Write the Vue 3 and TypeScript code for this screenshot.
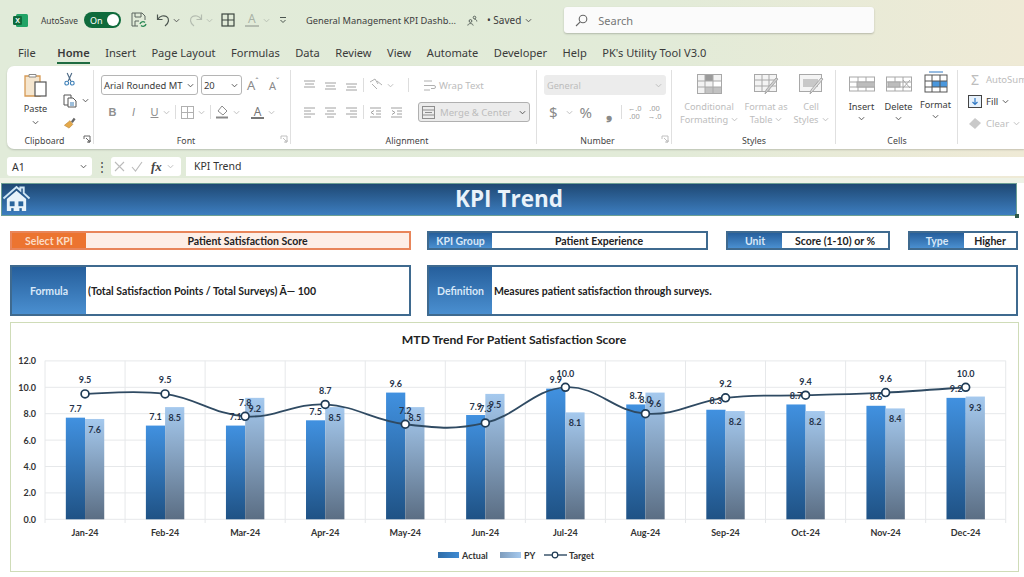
<script setup lang="ts">
import { h } from 'vue'

const Chev = () =>
  h('svg', { class: 'chev', viewBox: '0 0 8 5', width: 7, height: 5 }, h('path', { d: 'M1 1l3 3 3-3', fill: 'none', stroke: 'currentColor', 'stroke-width': 1.1 }))

const tabs = ['File', 'Home', 'Insert', 'Page Layout', 'Formulas', 'Data', 'Review', 'View', 'Automate', 'Developer', 'Help', "PK's Utility Tool V3.0"]

const months = ['Jan-24', 'Feb-24', 'Mar-24', 'Apr-24', 'May-24', 'Jun-24', 'Jul-24', 'Aug-24', 'Sep-24', 'Oct-24', 'Nov-24', 'Dec-24']
const actual = [7.7, 7.1, 7.1, 7.5, 9.6, 7.9, 9.9, 8.7, 8.3, 8.7, 8.6, 9.2]
const py = [7.6, 8.5, 9.2, 8.5, 8.5, 9.5, 8.1, 9.6, 8.2, 8.2, 8.4, 9.3]
const target = [9.5, 9.5, 7.8, 8.7, 7.2, 7.3, 10.0, 8.0, 9.2, 9.4, 9.6, 10.0]

const X0 = 45
const STEP = 80.06
const Y0 = 519.3
const UNIT = 13.2
const BAR = 19.2
const cx = (i: number) => X0 + STEP * (i + 0.5)
const vy = (v: number) => Y0 - v * UNIT

const ticks = [0, 2, 4, 6, 8, 10, 12]
const verticals = Array.from({ length: 13 }, (_, i) => X0 + STEP * i)
const points = target.map((v, i) => ({ x: cx(i), y: vy(v), v }))

function smooth(p: { x: number; y: number }[]): string {
  let d = `M${p[0].x} ${p[0].y}`
  for (let i = 0; i < p.length - 1; i++) {
    const a = p[Math.max(i - 1, 0)]
    const b = p[i]
    const c = p[i + 1]
    const e = p[Math.min(i + 2, p.length - 1)]
    const k = 0.2
    d += ` C${b.x + (c.x - a.x) * k} ${b.y + (c.y - a.y) * k} ${c.x - (e.x - b.x) * k} ${c.y - (e.y - b.y) * k} ${c.x} ${c.y}`
  }
  return d
}
const linePath = smooth(points)
</script>

<template>
  <div class="app">
    <header class="titlebar">
      <svg class="m13" width="15" height="15" viewBox="0 0 15 15"><rect x="3" y="1" width="12" height="13" rx="1.5" fill="#21a366" /><rect x="0" y="3" width="9" height="9" rx="1.2" fill="#0f6b3c" /><text x="4.5" y="10" font-size="7" font-weight="700" fill="#fff" text-anchor="middle" font-family="Liberation Sans, sans-serif">X</text></svg>
      <span class="autosave">AutoSave</span>
      <span class="toggle"><span class="on">On</span><i class="knob"></i></span>
      <svg class="m10" width="16" height="16" viewBox="0 0 16 16" fill="none" stroke="#5c6660" stroke-width="1"><path d="M1 1h10l3 3v4M1 1v13h6" /><path d="M4 1v4h6V1M4 14V9h4" /><path d="M9 12a3 3 0 0 1 5-1.5M15 12a3 3 0 0 1-5 1.5" stroke="#2e8b57" stroke-width="1.3" /></svg>
      <svg class="m9" width="14" height="14" viewBox="0 0 14 14" fill="none" stroke="#4c5650" stroke-width="1.2"><path d="M1.5 1.5v5h5" /><path d="M1.8 6.2C4 2.8 8 2 10.5 3.6c3 2 2.8 6.4-1.5 9.4" /></svg>
      <Chev class="m3 dark" />
      <svg class="m9" width="14" height="14" viewBox="0 0 14 14" fill="none" stroke="#b4bcb0" stroke-width="1.2"><path d="M12.5 1.5v5h-5" /><path d="M12.2 6.2C10 2.8 6 2 3.5 3.6c-3 2-2.8 6.4 1.5 9.4" /></svg>
      <Chev class="m3 pale" />
      <svg class="m8" width="14" height="14" viewBox="0 0 14 14" fill="none" stroke="#3d4640" stroke-width="1.2"><rect x="1" y="1" width="12" height="12" /><path d="M7 1v12M1 7h12" /></svg>
      <span class="font-a"><b>A</b><i></i></span>
      <Chev class="m4 pale" />
      <svg class="m9" width="8" height="8" viewBox="0 0 8 8" fill="none" stroke="#4c5650"><path d="M1 1.5h6M1.5 4l2.5 2.5L6.5 4" /></svg>
      <span class="doc">General Management KPI Dashb...</span>
      <svg class="m11" width="11" height="11" viewBox="0 0 11 11" fill="none" stroke="#4c5650" stroke-width=".9"><circle cx="3.5" cy="6" r="1.4" /><path d="M.8 10.5c.3-2.6 5-2.6 5.4 0" /><circle cx="7.5" cy="2.5" r="1.3" /><path d="M9.8 6.5c0-1.5-1-2.3-2.3-2.3" /></svg>
      <span class="saved">• Saved</span>
      <Chev class="m4 dark" />
      <div class="search">
        <svg width="13" height="13" viewBox="0 0 13 13" fill="none" stroke="#666" stroke-width="1.1"><circle cx="8" cy="5" r="3.8" /><path d="M5.2 7.8 1 12" /></svg>
        <span>Search</span>
      </div>
    </header>

    <nav class="tabs">
      <span v-for="t in tabs" :key="t" class="tab" :class="{ active: t === 'Home', first: t === 'File' }">{{ t }}</span>
    </nav>

    <section class="ribbon">
      <div class="group g-clip">
        <div class="g-body clip">
          <div class="paste">
            <svg width="25" height="26" viewBox="0 0 25 26" fill="none"><path d="M2 4h15v20H2z" fill="#f5e6cf" stroke="#d69a55" stroke-width="1.3" /><path d="M6 5V2.5h7V5z" fill="#fff" stroke="#8a8a8a" /><rect x="12" y="10" width="11" height="14" fill="#fff" stroke="#555" stroke-width="1.2" /></svg>
            <span class="lbl">Paste</span>
            <Chev class="dark" />
          </div>
          <div class="clip-col">
            <svg width="13" height="15" viewBox="0 0 13 15" fill="none" stroke="#4d6a86" stroke-width="1.2"><path d="M4 1l4 9M9 1L5 10" /><circle cx="3.5" cy="12" r="2" stroke="#3c7fb8" /><circle cx="9.5" cy="12" r="2" stroke="#3c7fb8" /></svg>
            <div class="row-c">
              <svg width="15" height="14" viewBox="0 0 15 14" fill="none" stroke="#555" stroke-width="1"><path d="M1 1h7v10H1z" /><path d="M5 4h5l3 3v6H5z" fill="#fff" /><path d="M7 9h4M7 11h4" stroke="#3c7fb8" /></svg>
              <Chev class="m4 dark" />
            </div>
            <svg width="14" height="14" viewBox="0 0 14 14"><path d="M8 6l3-4 2 1.5-3 4z" fill="#666" /><path d="M1 10l6-5 3 4-4 4z" fill="#e5a94a" stroke="#b57d2a" stroke-width=".6" /></svg>
          </div>
        </div>
        <div class="g-label shift12">Clipboard</div>
        <svg class="launch" width="8" height="8" viewBox="0 0 8 8" fill="none" stroke="#666"><path d="M1 4V1h6v6H4M3 3l4 4M5 7h2V5" /></svg>
      </div>

      <div class="group g-font">
        <div class="g-body">
          <div class="rrow pl7">
            <div class="sel w96"><span>Arial Rounded MT</span><Chev class="dark" /></div>
            <div class="sel w41 ml3"><span>20</span><Chev class="dark" /></div>
            <span class="grow-a ml5">A<sup>ˆ</sup></span>
            <span class="grow-a small ml8">A<sup>ˇ</sup></span>
          </div>
          <div class="rrow pl14 dis">
            <b class="g-b">B</b>
            <i class="g-i ml12">I</i>
            <u class="g-u ml12">U</u>
            <Chev class="m4" />
            <i class="vsep ml5"></i>
            <svg class="ml5" width="13" height="13" viewBox="0 0 13 13" fill="none" stroke="#b0b0b0"><rect x=".5" y=".5" width="12" height="12" /><path d="M6.5 0v13M0 6.5h13" /></svg>
            <Chev class="m4" />
            <i class="vsep ml5"></i>
            <svg class="ml5" width="13" height="14" viewBox="0 0 13 14" fill="none" stroke="#8c8c8c"><path d="M6 1l5 5-4 4-5-4z" /><path d="M0 12.5h12" stroke="#888" stroke-width="2" /></svg>
            <Chev class="m4" />
            <span class="fc-a ml11">A</span>
            <Chev class="m4" />
          </div>
        </div>
        <div class="g-label shift13">Font</div>
        <svg class="launch" width="8" height="8" viewBox="0 0 8 8" fill="none" stroke="#c0c0c0"><path d="M1 4V1h6v6H4M3 3l4 4M5 7h2V5" /></svg>
      </div>

      <div class="group g-align">
        <div class="g-body">
          <div class="rrow pl12 dis">
            <svg width="13" height="10" viewBox="0 0 13 10" stroke="#a0a0a0"><path d="M1 1h11M2 4h9M1 7h11" /></svg>
            <svg class="ml8" width="13" height="10" viewBox="0 0 13 10" stroke="#a0a0a0"><path d="M1 3h11M2 6h9M1 9h11" /></svg>
            <svg class="ml8" width="13" height="12" viewBox="0 0 13 12" stroke="#a0a0a0"><path d="M1 5h11M2 8h9M1 11h11" /></svg>
            <i class="vsep ml5"></i>
            <svg class="ml5" width="14" height="14" viewBox="0 0 14 14" fill="none" stroke="#b0b0b0"><path d="M1 4l5-3 3 5M3 6l5 5M8 3l5 4" /></svg>
            <Chev class="m4" />
            <i class="vsep ml14"></i>
            <span class="wrap ml14"><svg width="13" height="13" viewBox="0 0 13 13" fill="none" stroke="#b0b0b0"><path d="M1 2h8M1 11h6M1 6.5h10a1.5 1.5 0 0 1 0 3H8" /></svg>Wrap Text</span>
          </div>
          <div class="rrow pl12 dis">
            <svg width="13" height="11" viewBox="0 0 13 11" stroke="#a0a0a0"><path d="M1 1h11M1 4h7M1 7h11M1 10h7" /></svg>
            <svg class="ml8" width="13" height="11" viewBox="0 0 13 11" stroke="#a0a0a0"><path d="M1 1h11M3 4h7M1 7h11M3 10h7" /></svg>
            <svg class="ml8" width="13" height="11" viewBox="0 0 13 11" stroke="#a0a0a0"><path d="M1 1h11M5 4h7M1 7h11M5 10h7" /></svg>
            <i class="vsep ml5"></i>
            <svg class="ml5" width="13" height="11" viewBox="0 0 13 11" fill="none" stroke="#a0a0a0"><path d="M1 1h11M7 4h5M7 7h5M1 10h11M5 3.5 2 5.5 5 7.5" /></svg>
            <svg class="ml8" width="13" height="11" viewBox="0 0 13 11" fill="none" stroke="#a0a0a0"><path d="M1 1h11M7 4h5M7 7h5M1 10h11M2 3.5 5 5.5 2 7.5" /></svg>
            <div class="merge ml15">
              <svg width="13" height="13" viewBox="0 0 13 13" fill="none" stroke="#8e8e8e"><rect x=".5" y=".5" width="12" height="12" /><path d="M0 4h13M0 9h13M3 6.5h7" /></svg>
              <span>Merge &amp; Center</span>
              <Chev class="dark" />
            </div>
          </div>
        </div>
        <div class="g-label shift14">Alignment</div>
      </div>

      <div class="group g-num">
        <div class="g-body">
          <div class="rrow pl7">
            <div class="numsel"><span>General</span><Chev /></div>
          </div>
          <div class="rrow pl12 numrow">
            <span class="n-sym">$</span>
            <Chev class="m8" />
            <span class="n-sym pct ml7">%</span>
            <span class="n-sym cm ml12">❟</span>
            <i class="vsep ml7"></i>
            <span class="dec ml6"><small>←.0</small><small>.00</small></span>
            <span class="dec ml6"><small>.00</small><small>→.0</small></span>
          </div>
        </div>
        <div class="g-label shift14">Number</div>
        <svg class="launch" width="8" height="8" viewBox="0 0 8 8" fill="none" stroke="#c0c0c0"><path d="M1 4V1h6v6H4M3 3l4 4M5 7h2V5" /></svg>
      </div>

      <div class="group g-styles">
        <div class="g-body big-row">
          <div class="big w-a">
            <svg width="25" height="20" viewBox="0 0 25 20"><rect x=".5" y=".5" width="24" height="19" fill="#f2f2f2" stroke="#a8a8a8" /><rect x="8" y="1" width="8" height="6" fill="#9a9a9a" /><rect x="16" y="7" width="8" height="6" fill="#fff" /><rect x="8" y="13" width="16" height="6" fill="#c2c2c2" /><path d="M0 7h25M0 13h25M8 0v20M16 0v20" stroke="#a8a8a8" fill="none" /></svg>
            <span class="bt dis-t">Conditional</span>
            <span class="bt dis-t">Formatting<Chev class="m3" /></span>
          </div>
          <div class="big w-b">
            <svg width="25" height="20" viewBox="0 0 25 20" fill="none" stroke="#a8a8a8"><rect x=".5" y=".5" width="22" height="17" fill="#f4f4f4" /><path d="M0 6h23M0 12h23M8 0v18M15 0v18" /><path d="M24 5 13 18l-2 2 1-4L22 4z" fill="#d0d0d0" /></svg>
            <span class="bt dis-t">Format as</span>
            <span class="bt dis-t">Table<Chev class="m3" /></span>
          </div>
          <div class="big w-c">
            <svg width="25" height="20" viewBox="0 0 25 20" fill="none" stroke="#a8a8a8"><rect x=".5" y=".5" width="22" height="17" fill="#f4f4f4" /><rect x="4" y="5" width="15" height="8" fill="#c8c8c8" stroke="none" /><path d="M24 5 13 18l-2 2 1-4L22 4z" fill="#e0e0e0" /></svg>
            <span class="bt dis-t">Cell</span>
            <span class="bt dis-t">Styles<Chev class="m3" /></span>
          </div>
        </div>
        <div class="g-label">Styles</div>
      </div>

      <div class="group g-cells">
        <div class="g-body big-row">
          <div class="big w-i">
            <svg width="26" height="20" viewBox="0 0 26 20" fill="none" stroke="#a8a8a8"><rect x=".5" y="3" width="25" height="14" /><path d="M0 8h26M0 13h26M9 3v14M17 3v14" /><rect x="8" y="8" width="18" height="5" fill="#bdbdbd" /></svg>
            <span class="bt solid">Insert</span>
            <Chev class="dark m4t" />
          </div>
          <div class="big w-i">
            <svg width="26" height="20" viewBox="0 0 26 20" fill="none" stroke="#a8a8a8"><rect x=".5" y="3" width="25" height="14" /><path d="M0 8h26M0 13h26M9 3v14M17 3v14" /><rect x="2" y="8" width="12" height="5" fill="#bdbdbd" /><path d="M17 6l7 8M24 6l-7 8" /></svg>
            <span class="bt solid">Delete</span>
            <Chev class="dark m4t" />
          </div>
          <div class="big w-i fmt">
            <svg width="26" height="22" viewBox="0 0 26 22" fill="none" stroke="#555"><path d="M6 1h14" stroke="#2f78c4" /><rect x="2" y="4" width="22" height="17" /><rect x="9" y="10" width="15" height="6" fill="#4a97dc" stroke="none" /><path d="M2 10h22M2 16h22M9 4v17M17 4v17" /></svg>
            <span class="bt solid">Format</span>
            <Chev class="dark m4t" />
          </div>
        </div>
        <div class="g-label">Cells</div>
      </div>

      <div class="group g-edit">
        <div class="edit-col">
          <div class="e-row dis-t"><span class="sigma">Σ</span>AutoSum</div>
          <div class="e-row solid">
            <svg width="14" height="13" viewBox="0 0 14 13" fill="none" stroke="#444"><rect x=".5" y=".5" width="13" height="12" fill="#e7f1fb" /><path d="M7 3v6M4.5 7 7 9.5 9.5 7" stroke="#2f78c4" stroke-width="1.2" /></svg>
            Fill<Chev class="dark" />
          </div>
          <div class="e-row dis-t">
            <svg width="14" height="13" viewBox="0 0 14 13"><path d="M7 1l6 5-6 6-6-5z" fill="#c9c9c9" /></svg>
            Clear<Chev />
          </div>
        </div>
      </div>
    </section>

    <section class="formula-bar">
      <div class="namebox"><span>A1</span><Chev class="dark" /></div>
      <span class="dots">⋮</span>
      <div class="fx-box">
        <svg width="11" height="11" viewBox="0 0 11 11" stroke="#bbb" stroke-width="1.1"><path d="M1 1l9 9M10 1l-9 9" /></svg>
        <svg width="12" height="11" viewBox="0 0 12 11" fill="none" stroke="#bbb" stroke-width="1.1"><path d="M1 6l3.5 4L11 1" /></svg>
        <em>fx</em>
        <Chev />
      </div>
      <div class="f-input">KPI Trend</div>
    </section>

    <main class="sheet">
      <div class="banner">
        <svg class="home" width="29" height="27" viewBox="0 0 30 28">
          <path d="M1.5 14 15 2l4 3.5V2.5h3.5v6L28.5 14" fill="none" stroke="#cfe6f5" stroke-width="2" />
          <path d="M5 14.5 15 6l10 8.5V27H5z" fill="#e8f3fa" />
          <rect x="8" y="17" width="5" height="5" fill="#2a659c" />
          <rect x="17" y="17" width="5" height="5" fill="#2a659c" />
          <rect x="9.5" y="24" width="2.5" height="3" fill="#2a659c" />
          <rect x="18" y="24" width="2.5" height="3" fill="#2a659c" />
        </svg>
        <h1>KPI Trend</h1>
      </div>

      <div class="kpi-row top">
        <div class="kv orange w401"><span class="k k75">Select KPI</span><span class="v">Patient Satisfaction Score</span></div>
        <div class="kv w281 ml16"><span class="k k64">KPI Group</span><span class="v">Patient Experience</span></div>
        <div class="kv w164 ml18"><span class="k k55">Unit</span><span class="v">Score (1-10) or %</span></div>
        <div class="kv w110 ml18"><span class="k k55">Type</span><span class="v">Higher</span></div>
      </div>

      <div class="kpi-row mid">
        <div class="kv w401 tall"><span class="k k75">Formula</span><span class="v left">(Total Satisfaction Points / Total Surveys) Ã— 100</span></div>
        <div class="kv w591 ml16 tall"><span class="k k64">Definition</span><span class="v left">Measures patient satisfaction through surveys.</span></div>
      </div>

      <div class="chart-card">
        <svg class="chart" width="1007" height="249" viewBox="11 323 1007 249">
          <defs>
            <linearGradient id="ga" x1="0" y1="0" x2="0" y2="1"><stop offset="0" stop-color="#4191e0" /><stop offset="1" stop-color="#1f5285" /></linearGradient>
            <linearGradient id="gp" x1="0" y1="0" x2="0" y2="1"><stop offset="0" stop-color="#a5c9ee" /><stop offset="1" stop-color="#5b6e84" /></linearGradient>
            <linearGradient id="la" x1="0" y1="0" x2="1" y2="0"><stop offset="0" stop-color="#2f6da8" /><stop offset="1" stop-color="#3f8ad2" /></linearGradient>
            <linearGradient id="lp" x1="0" y1="0" x2="1" y2="0"><stop offset="0" stop-color="#7f9dbd" /><stop offset="1" stop-color="#a5c9ee" /></linearGradient>
          </defs>
          <text class="c-title" x="514" y="344" text-anchor="middle">MTD Trend For Patient Satisfaction Score</text>

          <line v-for="t in ticks" :key="'h' + t" :x1="X0" :x2="X0 + STEP * 12" :y1="vy(t)" :y2="vy(t)" stroke="#e6e8ea" />
          <line v-for="x in verticals" :key="'v' + x" :x1="x" :x2="x" y1="360.7" y2="523" stroke="#e6e8ea" />
          <text v-for="t in ticks" :key="'t' + t" class="axis" x="36" :y="vy(t) + 3.5" text-anchor="end">{{ t.toFixed(1) }}</text>

          <g v-for="(m, i) in months" :key="m">
            <rect :x="cx(i) - BAR" :y="vy(actual[i])" :width="BAR" :height="actual[i] * UNIT" fill="url(#ga)" />
            <rect :x="cx(i)" :y="vy(py[i])" :width="BAR" :height="py[i] * UNIT" fill="url(#gp)" />
            <text class="axis" :x="cx(i)" y="536" text-anchor="middle">{{ m }}</text>
          </g>

          <path :d="linePath" fill="none" stroke="#2f4a62" stroke-width="1.8" />
          <circle v-for="p in points" :key="'c' + p.x" :cx="p.x" :cy="p.y" r="3.9" fill="#fff" stroke="#1f3b55" stroke-width="1.7" />

          <g v-for="(m, i) in months" :key="'l' + m">
            <text class="dl" :x="cx(i) - 9.6" :y="vy(actual[i]) - 5.5" text-anchor="middle">{{ actual[i].toFixed(1) }}</text>
            <text class="dl" :x="cx(i) + 9.6" :y="vy(py[i]) + 14" text-anchor="middle">{{ py[i].toFixed(1) }}</text>
            <text class="dl" :x="cx(i)" :y="vy(target[i]) - 10.5" text-anchor="middle">{{ target[i].toFixed(1) }}</text>
          </g>

          <rect x="438" y="552" width="21" height="6" fill="url(#la)" />
          <text class="axis" x="462" y="558.5">Actual</text>
          <rect x="500" y="552" width="21" height="6" fill="url(#lp)" />
          <text class="axis" x="524" y="558.5">PY</text>
          <line x1="544" x2="567" y1="555" y2="555" stroke="#2f4a62" stroke-width="1.4" />
          <circle cx="555" cy="555" r="2.8" fill="#fff" stroke="#1f3b55" stroke-width="1.2" />
          <text class="axis" x="569" y="558.5">Target</text>
        </svg>
      </div>
    </main>
  </div>
</template>

<style scoped>
.app { width: 1024px; height: 577px; overflow: hidden; background: linear-gradient(90deg, #e1ebd9 0%, #e2ebd8 65%, #efead6 100%); font-family: "Noto Sans", "Open Sans", sans-serif; color: #333; display: flex; flex-direction: column; }
.chev { flex: none; color: #bdbdbd; }
.chev.dark { color: #555; }
.chev.pale { color: #b8c0b4; }
.m2 { margin-left: 2px; } .m3 { margin-left: 3px; } .m4 { margin-left: 4px; } .m6 { margin-left: 6px; } .m8 { margin-left: 8px; } .m9 { margin-left: 9px; } .m10 { margin-left: 10px; } .m11 { margin-left: 11px; } .m13 { margin-left: 13px; }
.ml3 { margin-left: 3px; } .ml5 { margin-left: 5px; } .ml6 { margin-left: 6px; } .ml7 { margin-left: 7px; } .ml8 { margin-left: 8px; } .ml11 { margin-left: 11px; } .ml12 { margin-left: 12px; } .ml14 { margin-left: 14px; } .ml15 { margin-left: 15px; } .ml16 { margin-left: 16px; } .ml18 { margin-left: 18px; }
.m4t { margin-top: 3px; }

.titlebar { height: 40px; display: flex; align-items: center; flex: none; }
.autosave { margin-left: 13px; font-size: 8.4px; color: #3c3c3c; }
.toggle { margin-left: 6px; width: 37px; height: 16px; border-radius: 8px; background: #0f6b3c; display: flex; align-items: center; justify-content: space-between; padding: 0 2px 0 6px; box-sizing: border-box; }
.toggle .on { font-size: 9px; color: #fff; }
.toggle .knob { width: 12px; height: 12px; border-radius: 50%; background: #fff; }
.font-a { margin-left: 10px; width: 14px; display: flex; flex-direction: column; align-items: center; color: #a9b2a5; }
.font-a b { font-weight: 400; font-size: 12px; line-height: 12px; }
.font-a i { width: 14px; height: 2px; background: #b5bdb0; }
.doc { margin-left: 19px; font-size: 9.3px; color: #3c3c3c; white-space: nowrap; }
.saved { margin-left: 9px; font-size: 10px; color: #3c3c3c; }
.search { margin-left: 32px; width: 310px; height: 26px; background: #fbfbfb; border-radius: 3px; box-shadow: 0 1px 2px rgba(0, 0, 0, .22); display: flex; align-items: center; padding-left: 11px; box-sizing: border-box; }
.search span { margin-left: 10px; font-size: 11px; color: #777; }

.tabs { height: 26px; display: flex; align-items: center; gap: 15.5px; padding-left: 18px; flex: none; }
.tab { font-size: 11.1px; color: #3a3a3a; line-height: 17px; white-space: nowrap; padding-bottom: 1px; }
.tab.first { margin-right: 6px; }
.tab.active { font-weight: 600; border-bottom: 2px solid #1e6b41; margin-bottom: -2px; }

.ribbon { flex: none; margin-left: 7px; height: 83px; background: #fff; border-radius: 7px 0 0 7px; box-shadow: 0 1px 2px rgba(0, 0, 0, .18); display: flex; }
.group { position: relative; flex: none; height: 83px; display: flex; flex-direction: column; box-sizing: border-box; }
.group::after { content: ""; position: absolute; right: 0; top: 4px; bottom: 5px; width: 1px; background: #e0e0e0; }
.g-clip { width: 87px; } .g-font { width: 197px; } .g-align { width: 246px; } .g-num { width: 135px; } .g-styles { width: 164px; } .g-cells { width: 122px; } .g-edit { flex: 1; }
.g-edit::after { display: none; }
.g-body { flex: none; height: 63px; box-sizing: border-box; display: flex; flex-direction: column; padding-top: 9px; gap: 7px; }
.g-label { height: 20px; box-sizing: border-box; padding-top: 5px; font-size: 8.8px; color: #444; text-align: center; line-height: 14px; flex: none; }
.shift12 { padding-right: 12px; } .shift13 { padding-right: 13px; } .shift14 { padding-right: 14px; }
.launch { position: absolute; right: 3px; bottom: 6px; }
.rrow { display: flex; align-items: center; height: 20px; }
.pl7 { padding-left: 7px; } .pl12 { padding-left: 12px; } .pl14 { padding-left: 14px; }
.lbl, .bt { font-size: 9.2px; line-height: 13px; white-space: nowrap; display: flex; align-items: center; }

.clip { flex-direction: row; gap: 0; padding-top: 6px; padding-left: 16px; }
.paste { width: 25px; display: flex; flex-direction: column; align-items: center; gap: 2px; color: #3a3a3a; }
.paste .lbl { margin: 2px 0 3px; }
.clip-col { margin-left: 15px; display: flex; flex-direction: column; gap: 8px; }
.row-c { display: flex; align-items: center; }

.sel { height: 20px; box-sizing: border-box; border: 1px solid #b5b5b5; border-radius: 3px; display: flex; align-items: center; justify-content: space-between; padding: 0 3px 0 2px; font-size: 9.4px; color: #3a3a3a; white-space: nowrap; }
.w96 { width: 97px; } .w41 { width: 41px; }
.grow-a { font-size: 13px; color: #8a8a8a; line-height: 1; width: 14px; }
.grow-a.small { font-size: 11px; }
.grow-a sup { font-size: 8px; line-height: 0; }
.dis { color: #a0a0a0; }
.g-b, .g-i, .g-u { font-size: 11px; width: 9px; text-align: center; color: #8f8f8f; font-family: "Liberation Sans", sans-serif; }
.vsep { width: 1px; height: 14px; background: #ddd; flex: none; }
.fc-a { font-size: 12px; color: #777; border-bottom: 2px solid #777; line-height: 11px; width: 13px; text-align: center; }
.wrap { display: flex; align-items: center; gap: 3px; font-size: 9.6px; color: #bcbcbc; white-space: nowrap; }
.merge { width: 112px; height: 20px; box-sizing: border-box; border: 1px solid #b0b0b0; border-radius: 3px; background: #ececec; display: flex; align-items: center; padding: 0 3px; gap: 5px; font-size: 9.6px; color: #bcbcbc; white-space: nowrap; }
.merge span { flex: 1; }
.numsel { width: 122px; height: 20px; box-sizing: border-box; border-radius: 3px; background: #ececec; display: flex; align-items: center; justify-content: space-between; padding: 0 4px 0 3px; font-size: 9.2px; color: #bcbcbc; }
.numrow { color: #8a8a8a; }
.n-sym { font-size: 15px; line-height: 1; color: #8a8a8a; }
.pct { font-size: 15px; width: 14px; }
.cm { font-size: 16px; font-weight: 700; width: 8px; }
.dec { display: flex; flex-direction: column; align-items: center; width: 14px; line-height: 8px; }
.dec small { font-size: 7.5px; color: #a0a0a0; white-space: nowrap; }

.big-row { flex-direction: row; gap: 0; padding-top: 8px; }
.big { display: flex; flex-direction: column; align-items: center; }
.big > svg:first-child { margin-bottom: 6px; height: 20px; }
.w-a { width: 66px; margin-left: 4px; } .w-b { width: 48px; } .w-c { width: 40px; margin-left: 1px; }
.w-i { width: 37px; }
.g-cells .big-row { padding-left: 7px; }
.fmt > svg:first-child { margin-top: -3px; height: 22px; margin-bottom: 5px; }
.dis-t { color: #bdbdbd; }
.solid { color: #3a3a3a; }

.edit-col { display: flex; flex-direction: column; gap: 7px; padding: 6px 0 0 10px; }
.e-row { display: flex; align-items: center; gap: 4px; font-size: 9.5px; height: 15px; white-space: nowrap; }
.sigma { font-size: 14px; color: #bdbdbd; line-height: 1; width: 14px; text-align: center; }

.formula-bar { flex: none; height: 19px; margin-top: 8px; display: flex; align-items: stretch; }
.namebox { margin-left: 7px; width: 85px; background: #fff; border-radius: 3px; display: flex; align-items: center; justify-content: space-between; padding: 0 5px; box-sizing: border-box; font-size: 10.5px; color: #333; }
.dots { width: 19px; text-align: center; font-size: 12px; line-height: 19px; color: #444; }
.fx-box { width: 70px; background: #fff; border-radius: 3px; display: flex; align-items: center; gap: 6px; padding: 0 3px; box-sizing: border-box; }
.fx-box em { font-family: "Liberation Serif", serif; font-size: 13px; font-weight: 700; color: #444; margin: 0 -1px 0 2px; }
.f-input { margin-left: 5px; flex: 1; background: #fff; font-size: 10.5px; line-height: 19px; padding-left: 8px; color: #333; }

.sheet { flex: 1; margin-top: 2px; padding-top: 5px; background: linear-gradient(#eef2e6 0 5px, #fff 5px); box-sizing: border-box; overflow: hidden; font-family: Lato, "Liberation Sans", sans-serif; }
.banner { position: relative; margin-left: 1px; width: 1016px; height: 33px; box-sizing: border-box; border: 1.5px solid #6d9f94; background: linear-gradient(#1e4873, #3d7ec0); display: flex; align-items: center; justify-content: center; }
.banner::after { content: ""; position: absolute; right: -3px; bottom: -3px; width: 4px; height: 4px; background: #2f5a4a; }
.banner h1 { margin: 0; color: #e9f2fa; font-size: 22.5px; font-weight: 700; line-height: 1; font-family: "Open Sans", sans-serif; }
.home { position: absolute; left: 0; top: 1px; }

.kpi-row { display: flex; margin-left: 10px; }
.kpi-row.top { margin-top: 15px; height: 19px; }
.kpi-row.mid { margin-top: 15px; height: 51px; }
.kv { display: flex; box-sizing: border-box; border: 2px solid #3f6a8f; background: #fff; }
.tall { height: 51px; }
.w401 { width: 401px; } .w281 { width: 281px; } .w164 { width: 164px; } .w110 { width: 110px; } .w591 { width: 591px; }
.k { flex: none; display: flex; align-items: center; justify-content: center; background: linear-gradient(#265f9c, #4a8fd0); color: #d8e8f8; font-size: 10.5px; font-weight: 700; }
.k75 { width: 74px; } .k64 { width: 63px; } .k55 { width: 54px; }
.v { flex: 1; display: flex; align-items: center; justify-content: center; font-size: 10.5px; font-weight: 700; color: #222; white-space: nowrap; }
.v.left { justify-content: flex-start; padding-left: 2px; }
.orange { border-color: #e8855a; background: #fdeee6; }
.orange .k { background: #ec7430; color: #fbdcc6; }

.chart-card { margin: 6px 0 0 10px; width: 1009px; height: 250px; box-sizing: border-box; border: 1px solid #cfdcb8; background: #fff; }
.chart { display: block; }
.c-title { font-size: 12.2px; font-weight: 700; fill: #222; font-family: Lato, sans-serif; }
.axis { font-size: 9px; font-weight: 700; fill: #333; font-family: Lato, sans-serif; }
.dl { font-size: 9px; font-weight: 700; fill: #26344a; font-family: Lato, sans-serif; }
</style>
